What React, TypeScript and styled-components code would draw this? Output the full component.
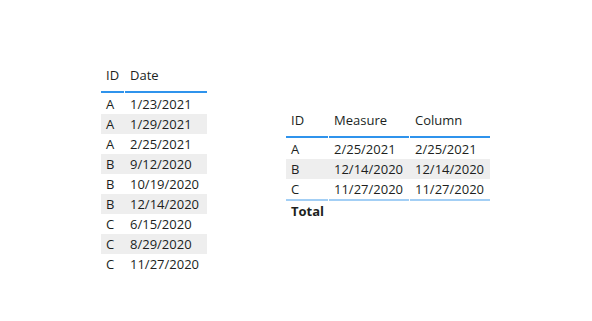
import React from "react";
import styled, { createGlobalStyle } from "styled-components";

const Global = createGlobalStyle`
  html, body { margin: 0; padding: 0; background: #ffffff; }
  body { font-family: "Open Sans", "Segoe UI", "Noto Sans", sans-serif; color: #201f1e; }
`;

const Page = styled.div`
  width: 592px;
  height: 321px;
  display: flex;
  align-items: flex-start;
  gap: 79px;
  padding: 66px 0 0 101px;
  box-sizing: border-box;
`;

const Table = styled.div<{ $offset: number }>`
  display: flex;
  flex-direction: column;
  margin-top: ${(p) => p.$offset}px;
  font-size: 13px;
`;

const Row = styled.div<{ $cols: string; $shaded?: boolean }>`
  display: grid;
  grid-template-columns: ${(p) => p.$cols};
  column-gap: 1px;
  height: 20px;
  align-items: center;
  background: ${(p) => (p.$shaded ? "#eeeeee" : "transparent")};
`;

const HeaderRow = styled.div<{ $cols: string }>`
  display: grid;
  grid-template-columns: ${(p) => p.$cols};
  column-gap: 1px;
  margin-bottom: 1px;
`;

const HeaderCell = styled.div`
  height: 18px;
  line-height: 18px;
  padding: 0 0 7px 5px;
  border-bottom: 2px solid #2f93ec;
  white-space: nowrap;
`;

const Cell = styled.div`
  padding-left: 5px;
  white-space: nowrap;
  line-height: 20px;
`;

const TotalRow = styled.div<{ $cols: string }>`
  display: grid;
  grid-template-columns: ${(p) => p.$cols};
  column-gap: 1px;
`;

const TotalCell = styled.div`
  border-top: 2px solid #a3cff5;
  padding-left: 5px;
  height: 20px;
  line-height: 20px;
  font-weight: 700;
`;

const leftCols = "23px 82px";
const rightCols = "42px 80px 80px";

const leftData = [
  ["A", "1/23/2021"],
  ["A", "1/29/2021"],
  ["A", "2/25/2021"],
  ["B", "9/12/2020"],
  ["B", "10/19/2020"],
  ["B", "12/14/2020"],
  ["C", "6/15/2020"],
  ["C", "8/29/2020"],
  ["C", "11/27/2020"],
];

const rightData = [
  ["A", "2/25/2021", "2/25/2021"],
  ["B", "12/14/2020", "12/14/2020"],
  ["C", "11/27/2020", "11/27/2020"],
];

export default function App() {
  return (
    <>
      <Global />
      <Page>
        <Table $offset={0}>
          <HeaderRow $cols={leftCols}>
            <HeaderCell>ID</HeaderCell>
            <HeaderCell>Date</HeaderCell>
          </HeaderRow>
          {leftData.map((r, i) => (
            <Row key={i} $cols={leftCols} $shaded={i % 2 === 1}>
              {r.map((c, j) => (
                <Cell key={j}>{c}</Cell>
              ))}
            </Row>
          ))}
        </Table>
        <Table $offset={45}>
          <HeaderRow $cols={rightCols}>
            <HeaderCell>ID</HeaderCell>
            <HeaderCell>Measure</HeaderCell>
            <HeaderCell>Column</HeaderCell>
          </HeaderRow>
          {rightData.map((r, i) => (
            <Row key={i} $cols={rightCols} $shaded={i % 2 === 1}>
              {r.map((c, j) => (
                <Cell key={j}>{c}</Cell>
              ))}
            </Row>
          ))}
          <TotalRow $cols={rightCols}>
            <TotalCell>Total</TotalCell>
            <TotalCell />
            <TotalCell />
          </TotalRow>
        </Table>
      </Page>
    </>
  );
}
